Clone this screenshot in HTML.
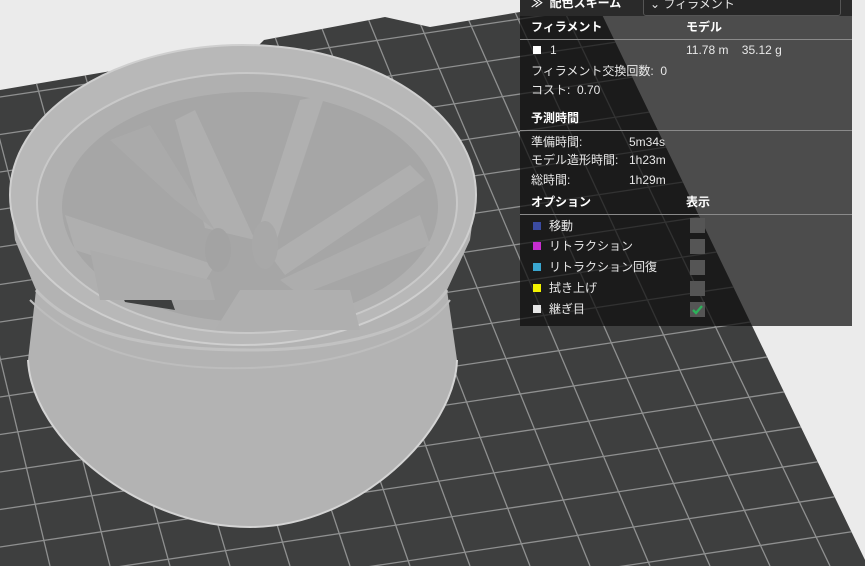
<!DOCTYPE html>
<html><head><meta charset="utf-8"><style>
html,body{margin:0;padding:0;width:865px;height:566px;overflow:hidden;background:#ebebeb;font-family:"Liberation Sans","Noto Sans CJK JP",sans-serif;}
svg.bg{position:absolute;left:0;top:0}
#panel{position:absolute;left:520px;top:0;width:332px;height:326px;background:rgba(14,14,14,0.72);color:#e8e8e8;font-size:12px;overflow:hidden}
.t{position:absolute;white-space:nowrap;line-height:14px}
.b{font-weight:bold;color:#fff}
.hr{position:absolute;left:0;width:332px;height:1px;background:#8a8a8a}
.sw{position:absolute;left:13px;width:8px;height:8px}
.cb{position:absolute;left:170px;width:15px;height:15px;background:#555}
</style></head><body>
<svg class="bg" width="865" height="566" viewBox="0 0 865 566">
<defs><clipPath id="pl"><polygon points="0,90 258,46 264,40 385,17 430,27 520,12 595,0 865,560 865,566 0,566"/></clipPath></defs>
<polygon points="0,90 258,46 264,40 385,17 430,27 520,12 595,0 865,560 865,566 0,566" fill="#3e3f3f"/>
<g stroke="#8f9090" stroke-width="1.3" id="g" clip-path="url(#pl)"></g>
<path d="M10,195 A233,150 0 0 1 476,195 L470,240 L447,290 L457,360 C455,430 360,527 250,527 C140,527 32,440 28,360 L36,290 L15,240 Z" fill="#b3b3b3"/>
<path d="M28,360 C32,440 140,527 250,527 C360,527 455,430 457,360" fill="none" stroke="#d4d4d4" stroke-width="2"/>
<path d="M36,290 C80,340 170,350 250,350 C340,350 420,330 447,290" fill="none" stroke="#c2c2c2" stroke-width="3"/>
<ellipse cx="243" cy="195" rx="233" ry="150" fill="#b8b8b8" stroke="#cfcfcf" stroke-width="2"/>
<ellipse cx="247" cy="203" rx="210" ry="130" fill="#b0b0b0" stroke="#c9c9c9" stroke-width="2"/>
<ellipse cx="250" cy="207" rx="188" ry="115" fill="#a6a6a6"/>
<polygon points="120,290 170,296 175,310 125,302" fill="#3e3f3f"/>
<polygon points="205,228 175,120 195,110 255,240" fill="#afafaf"/>
<polygon points="255,240 300,100 325,95 275,245" fill="#b0b0b0"/>
<polygon points="270,255 410,165 425,180 285,275" fill="#afafaf"/>
<polygon points="280,280 420,215 430,245 300,295" fill="#adadad"/>
<polygon points="215,265 65,215 75,250 200,290" fill="#afafaf"/>
<polygon points="210,280 90,250 100,300 215,300" fill="#acacac"/>
<polygon points="240,290 215,330 360,330 350,290" fill="#afafaf"/>
<polygon points="175,200 110,140 150,125 215,230" fill="#aaaaaa"/>
<ellipse cx="218" cy="250" rx="13" ry="22" fill="#a3a3a3"/>
<ellipse cx="265" cy="245" rx="13" ry="24" fill="#a8a8a8"/>
<path d="M30,300 C90,360 180,370 250,368 C340,365 420,340 450,300" fill="none" stroke="#bdbdbd" stroke-width="2"/>
</svg>
<div id="panel">
<div style="position:absolute;left:0;top:0;width:332px;height:16px;background:#2a2a2a"></div>
<div class="t b" style="left:11px;top:-4px">≫&nbsp; 配色スキーム</div>
<div style="position:absolute;left:123px;top:-4px;width:196px;height:18px;border:1px solid #555;border-radius:3px;background:#262626"></div>
<div class="t" style="left:130px;top:-3px">⌄ フィラメント</div>
<div class="t b" style="left:11px;top:20px">フィラメント</div>
<div class="t b" style="left:166px;top:20px">モデル</div>
<div class="hr" style="top:39px"></div>
<div class="sw" style="top:46px;background:#fff"></div>
<div class="t" style="left:30px;top:43px">1</div>
<div class="t" style="left:166px;top:43px">11.78 m&nbsp;&nbsp;&nbsp; 35.12 g</div>
<div class="t" style="left:11px;top:64px">フィラメント交換回数:&nbsp; 0</div>
<div class="t" style="left:11px;top:83px">コスト:&nbsp; 0.70</div>
<div class="t b" style="left:11px;top:111px">予測時間</div>
<div class="hr" style="top:130px"></div>
<div class="t" style="left:11px;top:135px">準備時間:</div><div class="t" style="left:109px;top:135px">5m34s</div>
<div class="t" style="left:11px;top:153px">モデル造形時間:</div><div class="t" style="left:109px;top:153px">1h23m</div>
<div class="t" style="left:11px;top:173px">総時間:</div><div class="t" style="left:109px;top:173px">1h29m</div>
<div class="t b" style="left:11px;top:195px">オプション</div>
<div class="t b" style="left:166px;top:195px">表示</div>
<div class="hr" style="top:214px"></div>
<div class="sw" style="top:222px;background:#3b4ba0"></div><div class="t" style="left:29px;top:219px">移動</div><div class="cb" style="top:218px"></div>
<div class="sw" style="top:242px;background:#c72ed0"></div><div class="t" style="left:29px;top:239px">リトラクション</div><div class="cb" style="top:239px"></div>
<div class="sw" style="top:263px;background:#3aa6cf"></div><div class="t" style="left:29px;top:260px">リトラクション回復</div><div class="cb" style="top:260px"></div>
<div class="sw" style="top:284px;background:#f2f200"></div><div class="t" style="left:29px;top:281px">拭き上げ</div><div class="cb" style="top:281px"></div>
<div class="sw" style="top:305px;background:#e6e6e6"></div><div class="t" style="left:29px;top:302px">継ぎ目</div>
<div class="cb" style="top:302px"><svg width="15" height="15" viewBox="0 0 15 15"><path d="M3,8 L6,11 L12,4" stroke="#2db15a" stroke-width="2.4" fill="none"/></svg></div>
</div>
<script>
var g=document.getElementById('g'),s='';
for(var k=-1;k<18;k++){var y0=97+k*37.5;s+='<line x1="0" y1="'+y0+'" x2="865" y2="'+(y0-0.15*865)+'"/>';}
for(var k=-3;k<16;k++){var xb=50+60*k;var xt=xb-0.1733*(xb+734);s+='<line x1="'+xt+'" y1="0" x2="'+xb+'" y2="566"/>';}
g.innerHTML=s;
</script>
</body></html>
